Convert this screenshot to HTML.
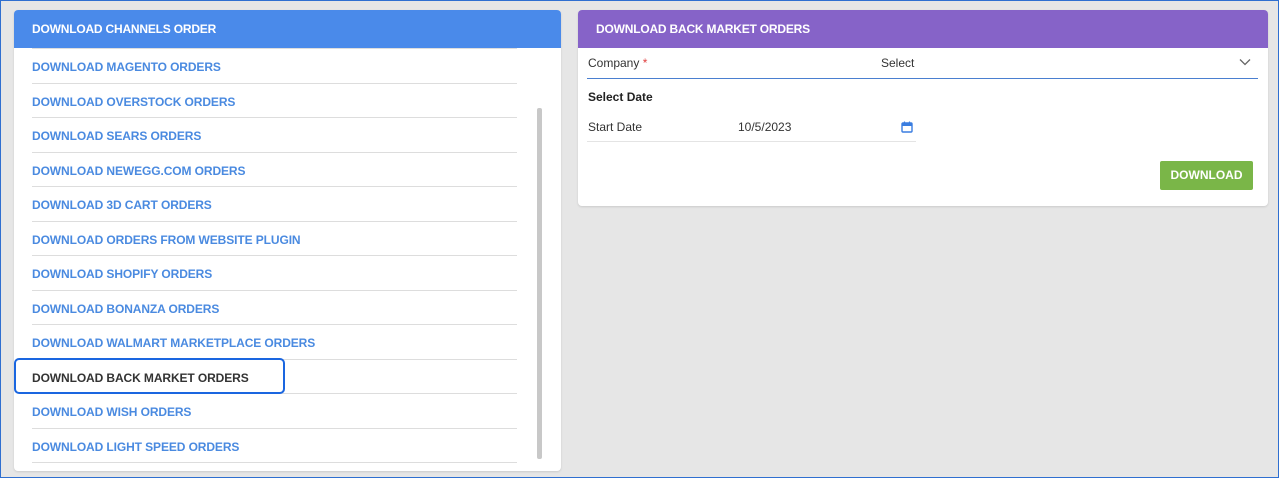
<!DOCTYPE html>
<html><head><style>
*{margin:0;padding:0;box-sizing:border-box}
body{width:1279px;height:478px;background:#e6e6e6;font-family:"Liberation Sans",Arial,sans-serif;position:relative;overflow:hidden;border:1px solid #2f6fd0}
.panel{position:absolute;background:#fff;border-radius:4px;box-shadow:0 1px 2px rgba(0,0,0,.12)}
.hd{height:38px;color:#fff;font-weight:bold;font-size:12px;line-height:39px;padding-left:18px;border-radius:4px 4px 0 0;letter-spacing:-0.2px}
.item{position:absolute;left:18px;width:485px;height:34.5px;border-bottom:1px solid #ddd;color:#4a8ae0;font-weight:bold;font-size:12px;line-height:36px;letter-spacing:-0.1px}
.lab{position:absolute;font-size:12px;color:#333}
</style></head><body>
<div class="panel" style="left:13px;top:9px;width:547px;height:461px">
<div class="hd" style="background:#4a8aea">DOWNLOAD CHANNELS ORDER</div>
<div style="position:absolute;left:18px;top:38px;width:485px;border-bottom:1px solid #ddd"></div>
<div class="item" style="top:39px">DOWNLOAD MAGENTO ORDERS</div>
<div class="item" style="top:73.5px">DOWNLOAD OVERSTOCK ORDERS</div>
<div class="item" style="top:108px">DOWNLOAD SEARS ORDERS</div>
<div class="item" style="top:142.5px">DOWNLOAD NEWEGG.COM ORDERS</div>
<div class="item" style="top:177px">DOWNLOAD 3D CART ORDERS</div>
<div class="item" style="top:211.5px">DOWNLOAD ORDERS FROM WEBSITE PLUGIN</div>
<div class="item" style="top:246px">DOWNLOAD SHOPIFY ORDERS</div>
<div class="item" style="top:280.5px">DOWNLOAD BONANZA ORDERS</div>
<div class="item" style="top:315px">DOWNLOAD WALMART MARKETPLACE ORDERS</div>
<div class="item" style="top:349.5px;color:#333">DOWNLOAD BACK MARKET ORDERS</div>
<div class="item" style="top:384px">DOWNLOAD WISH ORDERS</div>
<div class="item" style="top:418.5px">DOWNLOAD LIGHT SPEED ORDERS</div>
<div style="position:absolute;left:0px;top:348px;width:271px;height:36px;border:2px solid #1a66e0;border-radius:5px"></div>
<div style="position:absolute;left:523px;top:98px;width:5px;height:351px;background:#c8c8c8;border-radius:2px"></div>
</div>
<div class="panel" style="left:577px;top:9px;width:690px;height:196px">
<div class="hd" style="background:#8663c8">DOWNLOAD BACK MARKET ORDERS</div>
<div class="lab" style="left:10px;top:46px">Company <span style="color:#e04040">*</span></div>
<div class="lab" style="left:303px;top:46px">Select</div>
<svg style="position:absolute;left:661px;top:48px" width="12" height="8" viewBox="0 0 12 8"><path d="M1 1.5L6 6.5L11 1.5" fill="none" stroke="#666" stroke-width="1.3"/></svg>
<div style="position:absolute;left:9px;top:68px;width:671px;height:1px;background:#4a7fd0"></div>
<div class="lab" style="left:10px;top:80px;font-weight:bold;color:#222">Select Date</div>
<div class="lab" style="left:10px;top:110px">Start Date</div>
<div class="lab" style="left:160px;top:110px">10/5/2023</div>
<svg style="position:absolute;left:323px;top:111px" width="12" height="12" viewBox="0 0 12 12"><rect x="1" y="2" width="10" height="9" rx="1" fill="none" stroke="#3a7de0" stroke-width="1.4"/><rect x="1" y="2" width="10" height="3" fill="#3a7de0"/><path d="M3.5 0.5v2M8.5 0.5v2" stroke="#3a7de0" stroke-width="1.2"/></svg>
<div style="position:absolute;left:9px;top:131px;width:329px;height:1px;background:#e4e4e4"></div>
<div style="position:absolute;left:582px;top:151px;width:93px;height:29px;background:#7ab648;border-radius:2px;color:#fff;font-weight:bold;font-size:12px;line-height:29px;text-align:center">DOWNLOAD</div>
</div>
</body></html>
